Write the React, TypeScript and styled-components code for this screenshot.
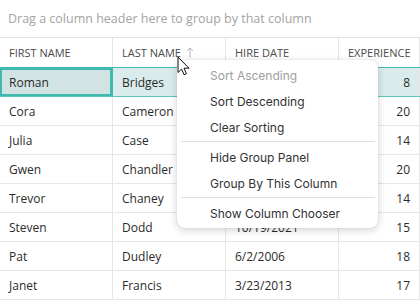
import { createGlobalStyle } from "styled-components";
import styled from "styled-components";

const GlobalStyle = createGlobalStyle`
  html, body {
    margin: 0;
    padding: 0;
    background: #fff;
  }
  body {
    font-family: "Open Sans", "Noto Sans", sans-serif;
  }
`;

const Screen = styled.div`
  position: relative;
  width: 420px;
  height: 300px;
  overflow: hidden;
  background: #fff;
`;

const GroupPanel = styled.div`
  height: 38px;
  box-sizing: border-box;
  display: flex;
  align-items: center;
  padding: 0 8px 1px;
  border-bottom: 1px solid #e3e3e3;
  color: #a3a3a3;
  font-size: 12.5px;
  white-space: nowrap;
`;

const Row = styled.div<{ $selected?: boolean; $header?: boolean }>`
  display: grid;
  grid-template-columns: 113px 113px 113px 1fr;
  height: ${(p) => (p.$header || p.$selected ? 30 : 29)}px;
  box-sizing: border-box;
  border-bottom: 1px solid ${(p) => (p.$selected ? "#5cc4bc" : "#e6e6e6")};
  background: ${(p) => (p.$selected ? "#d9eceb" : "#fff")};
  ${(p) => (p.$selected ? "margin-top: -1px; border-top: 1px solid #3fbab1;" : "")}
`;

const Cell = styled.div<{ $right?: boolean; $focused?: boolean }>`
  display: flex;
  align-items: center;
  justify-content: ${(p) => (p.$right ? "flex-end" : "flex-start")};
  padding: 0 9px;
  box-sizing: border-box;
  border-right: 1px solid #e6e6e6;
  color: #2b2b2b;
  font-size: 12px;
  white-space: nowrap;
  overflow: hidden;
  ${(p) =>
    p.$focused
      ? "background: #d1e3e2; box-shadow: inset 0 0 0 2px #3fbab1; border-right-color: #3fbab1;"
      : ""}
`;

const HeaderCell = styled(Cell)`
  color: #4a4a4a;
  font-size: 11px;
  gap: 5px;
`;

const Menu = styled.div`
  position: absolute;
  left: 177px;
  top: 60px;
  width: 201px;
  box-sizing: border-box;
  padding: 2px 0;
  background: #fff;
  border-radius: 8px;
  box-shadow: 0 2px 8px rgba(0, 0, 0, 0.18), 0 0 1px rgba(0, 0, 0, 0.2);
  font-family: "Inter", "Roboto", sans-serif;
`;

const MenuItem = styled.div<{ $disabled?: boolean }>`
  height: 26px;
  display: flex;
  align-items: center;
  padding-left: 33px;
  font-size: 12px;
  color: ${(p) => (p.$disabled ? "#9e9e9e" : "#323232")};
  white-space: nowrap;
`;

const Separator = styled.div`
  height: 1px;
  margin: 1px 3px 2px 4px;
  background: #dedede;
`;

const Pointer = styled.svg`
  position: absolute;
  left: 177px;
  top: 56px;
`;

type Employee = {
  first: string;
  last: string;
  hired: string;
  experience: number;
};

// hire dates of the first rows sit under the open menu
const employees: Employee[] = [
  { first: "Roman", last: "Bridges", hired: "", experience: 8 },
  { first: "Cora", last: "Cameron", hired: "", experience: 20 },
  { first: "Julia", last: "Case", hired: "", experience: 14 },
  { first: "Gwen", last: "Chandler", hired: "", experience: 20 },
  { first: "Trevor", last: "Chaney", hired: "", experience: 14 },
  { first: "Steven", last: "Dodd", hired: "10/19/2021", experience: 15 },
  { first: "Pat", last: "Dudley", hired: "6/2/2006", experience: 18 },
  { first: "Janet", last: "Francis", hired: "3/23/2013", experience: 17 },
];

function SortUp() {
  return (
    <svg width="8" height="11" viewBox="0 0 8 11">
      <path d="M4 10.5V1M1 4l3-3 3 3" fill="none" stroke="#b5b5b5" strokeWidth="1" />
    </svg>
  );
}

export default function App() {
  return (
    <Screen>
      <GlobalStyle />
      <GroupPanel>Drag a column header here to group by that column</GroupPanel>
      <Row $header>
        <HeaderCell>FIRST NAME</HeaderCell>
        <HeaderCell>
          LAST NAME <SortUp />
        </HeaderCell>
        <HeaderCell>HIRE DATE</HeaderCell>
        <HeaderCell>EXPERIENCE</HeaderCell>
      </Row>
      {employees.map((e, i) => (
        <Row key={e.first} $selected={i === 0}>
          <Cell $focused={i === 0}>{e.first}</Cell>
          <Cell>{e.last}</Cell>
          <Cell>{e.hired}</Cell>
          <Cell $right>{e.experience}</Cell>
        </Row>
      ))}
      <Menu>
        <MenuItem $disabled>Sort Ascending</MenuItem>
        <MenuItem>Sort Descending</MenuItem>
        <MenuItem>Clear Sorting</MenuItem>
        <Separator />
        <MenuItem>Hide Group Panel</MenuItem>
        <MenuItem>Group By This Column</MenuItem>
        <Separator />
        <MenuItem>Show Column Chooser</MenuItem>
      </Menu>
      <Pointer width="13" height="20" viewBox="0 0 13 20">
        <path
          d="M1 1v15.5l3.6-3.4 2.4 5.6 2.4-1-2.4-5.5h5z"
          fill="#fff"
          stroke="#111"
          strokeWidth="1"
          strokeLinejoin="round"
        />
      </Pointer>
    </Screen>
  );
}
